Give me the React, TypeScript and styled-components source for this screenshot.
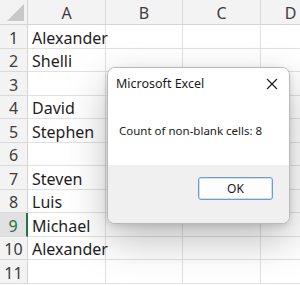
import React from 'react';
import styled, { createGlobalStyle } from 'styled-components';

const GlobalStyle = createGlobalStyle`
  html, body {
    margin: 0;
    padding: 0;
    width: 300px;
    height: 286px;
    overflow: hidden;
    background: #ffffff;
  }
  * {
    box-sizing: border-box;
  }
`;

const names = [
  'Alexander',
  'Shelli',
  '',
  'David',
  'Stephen',
  '',
  'Steven',
  'Luis',
  'Michael',
  'Alexander',
  '',
];

const columns = ['A', 'B', 'C', 'D'];
const selectedRow = 9;

const App: React.FC = () => {
  return (
    <Page>
      <GlobalStyle />
      <Sheet>
        <Corner>
          <CornerTriangle />
        </Corner>
        {columns.map((c) => (
          <ColHeader key={c}>{c}</ColHeader>
        ))}
        {names.map((name, i) => (
          <React.Fragment key={i}>
            <RowHeader $selected={i + 1 === selectedRow}>{i + 1}</RowHeader>
            <Cell>{name}</Cell>
            <Cell />
            <Cell />
            <Cell />
          </React.Fragment>
        ))}
      </Sheet>

      <Dialog>
        <TitleBar>
          <Title>Microsoft Excel</Title>
          <CloseButton>
            <svg width="12" height="12" viewBox="0 0 12 12">
              <path d="M1 1 L11 11 M11 1 L1 11" stroke="#1a1a1a" strokeWidth="1.1" />
            </svg>
          </CloseButton>
        </TitleBar>
        <Body>Count of non-blank cells: 8</Body>
        <Footer>
          <OkButton>OK</OkButton>
        </Footer>
      </Dialog>
    </Page>
  );
};

export default App;

const Page = styled.div`
  position: relative;
  width: 300px;
  height: 286px;
  overflow: hidden;
  font-family: 'Noto Sans', 'Open Sans', sans-serif;
`;

const Sheet = styled.div`
  display: grid;
  grid-template-columns: 28px 78px 77px 78px 60px;
  grid-template-rows: 25px repeat(11, 23.5px);
  background: #ffffff;
`;

const Corner = styled.div`
  position: relative;
  background: #f3f3f3;
  border-right: 1px solid #d4d4d4;
  border-bottom: 1px solid #d4d4d4;
`;

const CornerTriangle = styled.div`
  position: absolute;
  right: 3px;
  bottom: 3px;
  width: 17px;
  height: 17px;
  background: #c8c8c8;
  clip-path: polygon(100% 0, 100% 100%, 0 100%);
`;

const ColHeader = styled.div`
  background: #f3f3f3;
  border-right: 1px solid #d9d9d9;
  border-bottom: 1px solid #d4d4d4;
  color: #3c3c3c;
  font-size: 16px;
  display: flex;
  align-items: center;
  justify-content: center;
  padding-top: 1px;
`;

const RowHeader = styled.div<{ $selected?: boolean }>`
  background: ${(p) => (p.$selected ? '#e1e1e1' : '#f3f3f3')};
  color: ${(p) => (p.$selected ? '#217346' : '#3c3c3c')};
  border-right: ${(p) => (p.$selected ? '2px solid #217346' : '1px solid #d4d4d4')};
  border-bottom: 1px solid #dadada;
  font-size: 16px;
  display: flex;
  align-items: center;
  justify-content: center;
  padding-top: 3px;
`;

const Cell = styled.div`
  border-right: 1px solid #e1e1e1;
  border-bottom: 1px solid #e1e1e1;
  color: #1e1e1e;
  font-size: 16px;
  display: flex;
  align-items: center;
  padding: 3px 0 0 4px;
  white-space: nowrap;
`;

const Dialog = styled.div`
  position: absolute;
  left: 107px;
  top: 67px;
  width: 183px;
  height: 157px;
  border: 1px solid #b9b9b9;
  border-radius: 8px;
  background: #ffffff;
  box-shadow: 0 16px 40px rgba(0, 0, 0, 0.26), 0 2px 6px rgba(0, 0, 0, 0.12);
  display: flex;
  flex-direction: column;
  overflow: hidden;
  font-family: 'Noto Sans', 'Open Sans', sans-serif;
`;

const TitleBar = styled.div`
  height: 31px;
  display: flex;
  align-items: center;
  justify-content: space-between;
  padding: 0 11px 0 8px;
  background: #ffffff;
`;

const Title = styled.div`
  font-size: 12.5px;
  color: #1a1a1a;
`;

const CloseButton = styled.div`
  display: flex;
  align-items: center;
`;

const Body = styled.div`
  height: 66px;
  display: flex;
  align-items: center;
  padding: 0 0 3px 11px;
  font-size: 11.5px;
  color: #1a1a1a;
`;

const Footer = styled.div`
  flex: 1;
  background: #f0f0f0;
  display: flex;
  align-items: flex-start;
  justify-content: flex-end;
  padding: 12px 16px 0 0;
`;

const OkButton = styled.div`
  width: 75px;
  height: 23px;
  background: #fdfdfd;
  border: 1px solid #6f9cc8;
  border-radius: 3px;
  box-shadow: inset 0 0 0 1px #cfe0f1;
  display: flex;
  align-items: center;
  justify-content: center;
  font-size: 12px;
  color: #1a1a1a;
`;
